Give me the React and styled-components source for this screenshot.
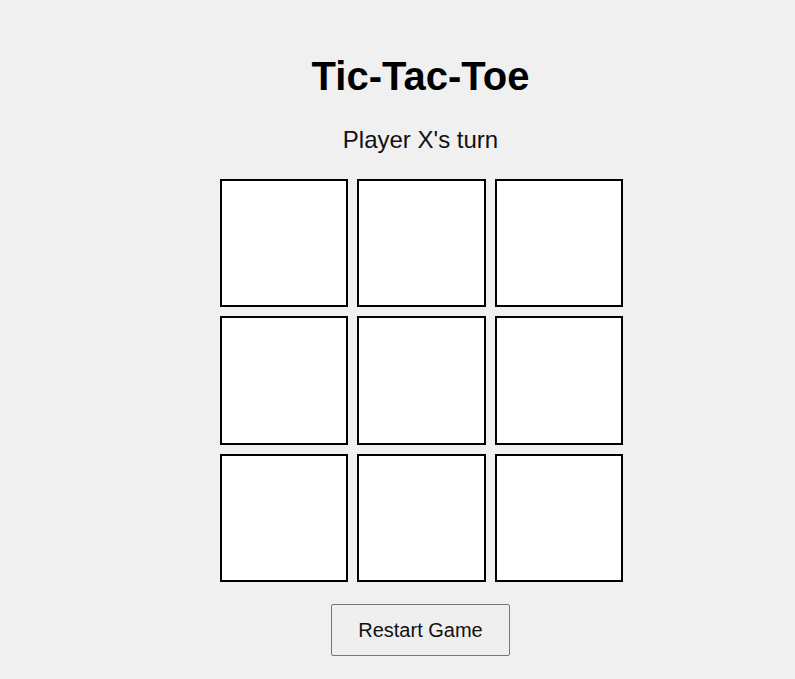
import React, { useState } from "react";
import styled, { createGlobalStyle } from "styled-components";

const GlobalStyle = createGlobalStyle`
  html, body {
    margin: 0;
    padding: 0;
    background-color: #f0f0f0;
    font-family: "Liberation Sans", Arial, sans-serif;
  }
`;

const Wrapper = styled.div`
  display: flex;
  flex-direction: column;
  align-items: center;
  padding: 53px 0 0 46px;
  min-height: 100vh;
  box-sizing: border-box;
`;

const Title = styled.h1`
  margin: 0;
  font-size: 40px;
  line-height: 46px;
  font-weight: bold;
  color: #000;
`;

const Status = styled.div`
  margin-top: 27px;
  font-size: 24px;
  line-height: 28px;
  color: #111;
`;

const Board = styled.div`
  display: grid;
  grid-template-columns: repeat(3, 128.67px);
  grid-template-rows: repeat(3, 128.33px);
  gap: 9px;
  margin: 25px 0 0 2px;
`;

const Cell = styled.button`
  box-sizing: border-box;
  width: 100%;
  height: 100%;
  padding: 0;
  border: 2px solid #000;
  border-radius: 0;
  background: #fff;
  font-family: inherit;
  font-size: 64px;
  font-weight: bold;
  color: #000;
  cursor: pointer;
`;

const RestartButton = styled.button`
  margin-top: 22px;
  padding: 13px 26px;
  font-family: inherit;
  font-size: 20px;
  line-height: 24px;
  color: #111;
  background-color: #efefef;
  border: 1px solid #767676;
  border-radius: 2px;
  cursor: pointer;
`;

function App() {
  const [cells, setCells] = useState(Array(9).fill(null));
  const [player, setPlayer] = useState("X");

  const play = (i) => {
    if (cells[i]) return;
    const next = cells.slice();
    next[i] = player;
    setCells(next);
    setPlayer(player === "X" ? "O" : "X");
  };

  const restart = () => {
    setCells(Array(9).fill(null));
    setPlayer("X");
  };

  return (
    <>
      <GlobalStyle />
      <Wrapper>
        <Title>Tic-Tac-Toe</Title>
        <Status>Player {player}'s turn</Status>
        <Board>
          {cells.map((c, i) => (
            <Cell key={i} onClick={() => play(i)}>
              {c}
            </Cell>
          ))}
        </Board>
        <RestartButton onClick={restart}>Restart Game</RestartButton>
      </Wrapper>
    </>
  );
}

export default App;
